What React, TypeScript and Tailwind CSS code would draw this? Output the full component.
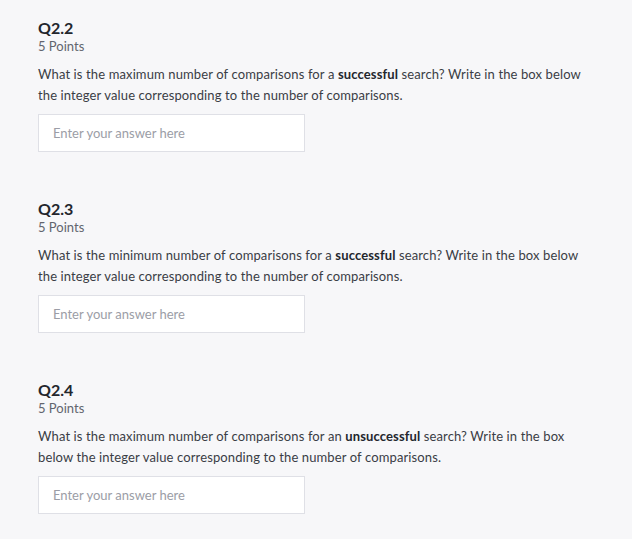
const QUESTIONS = [
  {
    id: "Q2.2",
    before: "What is the maximum number of comparisons for a ",
    bold: "successful",
    after: " search? Write in the box below the integer value corresponding to the number of comparisons.",
  },
  {
    id: "Q2.3",
    before: "What is the minimum number of comparisons for a ",
    bold: "successful",
    after: " search? Write in the box below the integer value corresponding to the number of comparisons.",
  },
  {
    id: "Q2.4",
    before: "What is the maximum number of comparisons for an ",
    bold: "unsuccessful",
    after: " search? Write in the box below the integer value corresponding to the number of comparisons.",
  },
];

export default function App() {
  return (
    <div className="min-h-[539px] w-[632px] bg-[#f7f7f9] pl-[38px] pt-[18px] font-['Lato',sans-serif]">
      {QUESTIONS.map((q) => (
        <section key={q.id} className="mb-[47px] w-[550px]">
          <h2 className="text-[16px] leading-[20px] font-bold text-[#23262d]">{q.id}</h2>
          <div className="text-[13px] leading-[16px] text-[#62656e]">5 Points</div>
          <p className="mt-[10px] text-[13px] leading-[21px] tracking-[0.12px] text-[#3a3d45]">
            {q.before}
            <strong className="font-bold text-[#23262d]">{q.bold}</strong>
            {q.after}
          </p>
          <input
            type="text"
            placeholder="Enter your answer here"
            className="mt-[8px] block h-[38px] w-[267px] border border-[#dfe0e6] bg-white px-[14px] text-[13px] text-[#3a3d45] placeholder:text-[#9b9da6] outline-none"
          />
        </section>
      ))}
    </div>
  );
}
